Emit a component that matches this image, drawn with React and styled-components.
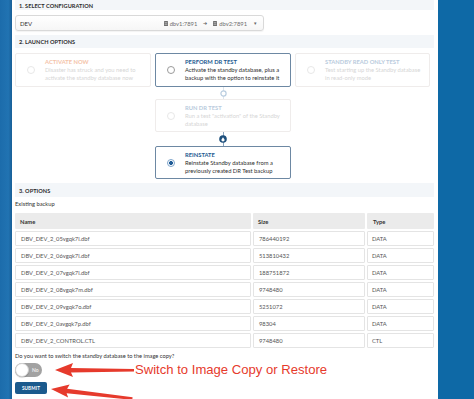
import React from 'react';
import styled, { createGlobalStyle } from 'styled-components';

const GlobalStyle = createGlobalStyle`
  html,
  body {
    margin: 0;
    padding: 0;
    width: 474px;
    height: 399px;
    overflow: hidden;
    background: #ffffff;
    font-family: Lato, 'Open Sans', 'Liberation Sans', sans-serif;
  }
  * {
    box-sizing: border-box;
  }
`;

const launchOptions = [
  {
    id: 'activate',
    title: 'ACTIVATE NOW',
    lines: ['Disaster has struck and you need to', 'activate the standby database now'],
    tone: 'warn',
    faded: true,
  },
  {
    id: 'perform',
    title: 'PERFORM DR TEST',
    lines: ['Activate the standby database, plus a', 'backup with the option to reinstate it'],
    tone: 'info',
  },
  {
    id: 'readonly',
    title: 'STANDBY READ ONLY TEST',
    lines: ['Test starting up the Standby database', 'in read-only mode'],
    tone: 'info',
    faded: true,
  },
];

const backups = [
  { name: 'DBV_DEV_2_05vgqk7l.dbf', size: '786440192', type: 'DATA' },
  { name: 'DBV_DEV_2_06vgqk7l.dbf', size: '513810432', type: 'DATA' },
  { name: 'DBV_DEV_2_07vgqk7l.dbf', size: '188751872', type: 'DATA' },
  { name: 'DBV_DEV_2_08vgqk7m.dbf', size: '9748480', type: 'DATA' },
  { name: 'DBV_DEV_2_09vgqk7o.dbf', size: '5251072', type: 'DATA' },
  { name: 'DBV_DEV_2_0avgqk7p.dbf', size: '98304', type: 'DATA' },
  { name: 'DBV_DEV_2_CONTROL.CTL', size: '9748480', type: 'CTL' },
];

// 작은 데이터베이스 아이콘
const DbIcon = () => (
  <svg width="4" height="5" viewBox="0 0 4 5">
    <rect x="0" y="0" width="4" height="5" rx="0.5" fill="#6f6f6f" />
    <line x1="0.6" y1="1.7" x2="3.4" y2="1.7" stroke="#fff" strokeWidth="0.45" />
    <line x1="0.6" y1="3.3" x2="3.4" y2="3.3" stroke="#fff" strokeWidth="0.45" />
  </svg>
);

const OptionCard = ({ title, lines, tone, faded, selected, col }) => (
  <Card $faded={faded} $col={col}>
    <Radio $faded={faded} $selected={selected} />
    <CardText>
      <CardTitle $tone={tone} $faded={faded}>{title}</CardTitle>
      {lines.map((line) => (
        <CardLine key={line} $faded={faded}>{line}</CardLine>
      ))}
    </CardText>
  </Card>
);

const App = () => {
  return (
    <Page>
      <GlobalStyle />
      <SideBar />

      <Main>
        <SectionHead $h={10}>1. SELECT CONFIGURATION</SectionHead>

        <SelectBox>
          <SelectValue>DEV</SelectValue>
          <SelectMeta>
            <DbIcon />
            <span>dbv1:7891</span>
            <MetaArrow>➔</MetaArrow>
            <DbIcon />
            <span>dbv2:7891</span>
            <Caret>▾</Caret>
          </SelectMeta>
        </SelectBox>

        <SectionHead $h={13} $mt={4}>2. LAUNCH OPTIONS</SectionHead>

        <LaunchGrid>
          {launchOptions.map((opt) => (
            <OptionCard key={opt.id} {...opt} />
          ))}

          <Connector>
            <svg width="7" height="7" viewBox="0 0 7 7">
              <circle cx="3.5" cy="3.5" r="2.6" fill="#fff" stroke="#b9cde0" strokeWidth="1.2" />
            </svg>
          </Connector>

          <OptionCard
            col={2}
            title="RUN DR TEST"
            lines={['Run a test "activation" of the Standby', 'database']}
            tone="info"
            faded
          />

          <Connector $tall>
            <svg width="8" height="8" viewBox="0 0 8 8">
              <circle cx="4" cy="4" r="3.8" fill="#1d4f7c" />
              <path d="M4 2.2 L5.5 4.4 A1.6 1.6 0 1 1 2.5 4.4 Z" fill="#fff" />
            </svg>
          </Connector>

          <OptionCard
            col={2}
            title="REINSTATE"
            lines={['Reinstate Standby database from a', 'previously created DR Test backup']}
            tone="info"
            selected
          />
        </LaunchGrid>

        <SectionHead $h={14} $mt={4}>3. OPTIONS</SectionHead>

        <FieldLabel>Existing backup</FieldLabel>

        <BackupTable>
          <HeadCell>Name</HeadCell>
          <HeadCell>Size</HeadCell>
          <HeadCell $pad={6}>Type</HeadCell>
          {backups.map((row) => (
            <React.Fragment key={row.name}>
              <Cell>{row.name}</Cell>
              <Cell>{row.size}</Cell>
              <Cell $pad={4}>{row.type}</Cell>
            </React.Fragment>
          ))}
        </BackupTable>

        <Question>Do you want to switch the standby database to the image copy?</Question>

        <Toggle>
          <Knob />
          <ToggleText>No</ToggleText>
        </Toggle>

        <SubmitButton>SUBMIT</SubmitButton>
      </Main>

      <RightPanel />

      {/* 빨간 화살표 주석 */}
      <Annotation width="474" height="399" viewBox="0 0 474 399">
        <polygon
          points="55,370 73,363 71,368 134,369 134,371.6 71,372.6 73,377"
          fill="#e63a2c"
        />
        <g transform="translate(51 389) rotate(6.5)">
          <polygon points="0,0 18,-6.5 16,-2 82,-1 82,1.6 16,2.4 18,6.5" fill="#e63a2c" />
        </g>
      </Annotation>
      <Callout>Switch to Image Copy or Restore</Callout>
    </Page>
  );
};

const Page = styled.div`
  position: relative;
  width: 474px;
  height: 399px;
  display: flex;
  overflow: hidden;
`;

const SideBar = styled.div`
  width: 12px;
  flex-shrink: 0;
  background: linear-gradient(90deg, #1c6cab 0%, #2173b2 70%, #185f97 100%);
`;

const RightPanel = styled.div`
  width: 36px;
  flex-shrink: 0;
  background: #0e69a6;
`;

const Main = styled.div`
  flex: 1;
  display: flex;
  flex-direction: column;
  padding: 0 4px 0 3px;
  min-width: 0;
`;

const SectionHead = styled.div`
  height: ${({ $h }) => $h}px;
  margin-top: ${({ $mt }) => $mt || 0}px;
  background: #f3f6f9;
  display: flex;
  align-items: center;
  padding-left: 4px;
  font-size: 5.6px;
  font-weight: 700;
  color: #2c2c2c;
  letter-spacing: 0.05px;
`;

const SelectBox = styled.div`
  margin-top: 5px;
  width: 249px;
  height: 16px;
  border: 1px solid #d9d9d9;
  border-radius: 3px;
  background: linear-gradient(#ffffff, #f6f6f6);
  box-shadow: 0 1px 1px rgba(0, 0, 0, 0.05);
  display: flex;
  align-items: center;
  justify-content: space-between;
  padding: 0 6px 0 4px;
`;

const SelectValue = styled.span`
  font-size: 6px;
  color: #333;
`;

const SelectMeta = styled.div`
  display: flex;
  align-items: center;
  gap: 2px;
  font-size: 5.8px;
  color: #6e6e6e;
`;

const MetaArrow = styled.span`
  margin: 0 4px;
  font-size: 5px;
  color: #555;
`;

const Caret = styled.span`
  margin-left: 5px;
  font-size: 5px;
  color: #666;
`;

const LaunchGrid = styled.div`
  margin-top: 5px;
  display: grid;
  grid-template-columns: 136px 136px 135px;
  column-gap: 4px;
`;

const Card = styled.div`
  grid-column: ${({ $col }) => $col || 'auto'};
  height: ${({ $col }) => ($col ? 33 : 34)}px;
  border: 1px solid ${({ $faded }) => ($faded ? '#efeceb' : '#6d88a3')};
  border-radius: 2px;
  background: #fff;
  display: flex;
  align-items: center;
  padding-left: 11px;
  gap: 10px;
`;

const Radio = styled.span`
  width: 8px;
  height: 8px;
  flex-shrink: 0;
  border-radius: 50%;
  border: 1px solid
    ${({ $faded, $selected }) => ($selected ? '#7fa6cc' : $faded ? '#e8e8e8' : '#9a9a9a')};
  background: ${({ $selected }) =>
    $selected ? 'radial-gradient(circle, #1f5b96 0 1.8px, #fff 2.2px)' : '#fff'};
`;

const CardText = styled.div`
  display: flex;
  flex-direction: column;
`;

const CardTitle = styled.span`
  font-size: 5.8px;
  line-height: 8px;
  font-weight: 700;
  color: ${({ $tone, $faded }) =>
    $tone === 'warn' ? '#f4c3a8' : $faded ? '#b9cbdd' : '#1e5a91'};
`;

const CardLine = styled.span`
  font-size: 5.8px;
  line-height: 8px;
  white-space: nowrap;
  color: ${({ $faded }) => ($faded ? '#d6d6d6' : '#2f2f2f')};
`;

const Connector = styled.div`
  grid-column: 2;
  height: ${({ $tall }) => ($tall ? 14 : 12)}px;
  position: relative;
  display: flex;
  align-items: center;
  justify-content: center;

  &::before {
    content: '';
    position: absolute;
    top: 0;
    bottom: 0;
    left: 50%;
    width: 1px;
    background: ${({ $tall }) => ($tall ? '#8aa4bd' : '#dde5ed')};
  }

  svg {
    position: relative;
  }
`;

const FieldLabel = styled.div`
  margin-top: 2px;
  line-height: 10px;
  font-size: 5.8px;
  color: #333;
`;

const BackupTable = styled.div`
  margin-top: 4px;
  display: grid;
  grid-template-columns: 236px 112px 1fr;
  grid-auto-rows: 15px;
  grid-template-rows: 16px;
  gap: 2px;
`;

const HeadCell = styled.div`
  background: #ebebeb;
  border-radius: 1px;
  display: flex;
  align-items: center;
  padding-left: ${({ $pad }) => $pad || 5}px;
  font-size: 5.8px;
  font-weight: 700;
  color: #333;
`;

const Cell = styled.div`
  background: #fff;
  border: 1px solid #e4e4e4;
  border-radius: 1px;
  display: flex;
  align-items: center;
  padding-left: ${({ $pad }) => $pad || 5}px;
  font-size: 5.8px;
  color: #555;
`;

const Question = styled.div`
  margin-top: 3px;
  line-height: 10px;
  font-size: 5.7px;
  color: #333;
`;

const Toggle = styled.div`
  margin-top: 2px;
  width: 27px;
  height: 14px;
  border-radius: 7px;
  background: #a2a2a2;
  display: flex;
  align-items: center;
`;

const Knob = styled.span`
  width: 14px;
  height: 14px;
  border-radius: 50%;
  background: #fff;
  border: 1px solid #d0d0d0;
  box-shadow: 0 1px 1px rgba(0, 0, 0, 0.15);
`;

const ToggleText = styled.span`
  margin-left: 3px;
  font-size: 5px;
  font-weight: 700;
  color: #eeeeee;
`;

const SubmitButton = styled.button`
  margin-top: 5px;
  width: 32px;
  height: 12px;
  padding: 0;
  border: none;
  border-radius: 2px;
  background: #1b5a8d;
  color: #fff;
  font-family: Lato, sans-serif;
  font-size: 4.6px;
  font-weight: 700;
  letter-spacing: 0.1px;
`;

const Annotation = styled.svg`
  position: absolute;
  top: 0;
  left: 0;
  pointer-events: none;
`;

const Callout = styled.div`
  position: absolute;
  left: 135px;
  top: 362px;
  font-family: 'Liberation Sans', Arial, sans-serif;
  font-size: 13.1px;
  line-height: 16px;
  color: #e63a2c;
  white-space: nowrap;
`;

export default App;
